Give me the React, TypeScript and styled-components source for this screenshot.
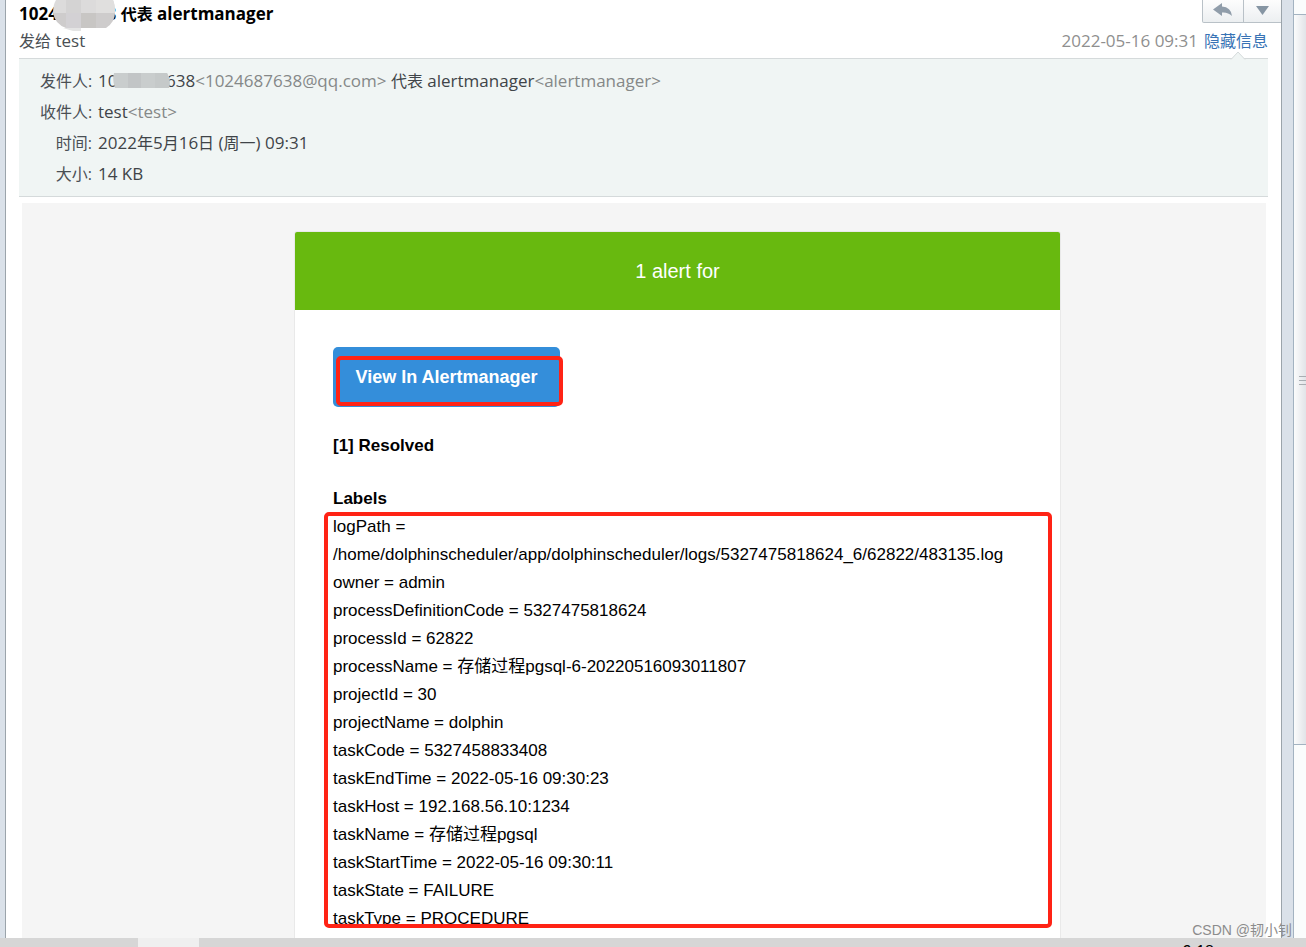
import React from "react";
import styled, { createGlobalStyle } from "styled-components";

const ui = `"Open Sans", "Noto Sans CJK SC", sans-serif`;
const mail = `"Liberation Sans", "Noto Sans CJK SC", sans-serif`;

const GlobalStyle = createGlobalStyle`
  *, *::before, *::after { box-sizing: border-box; }
  html, body { margin: 0; height: 100%; overflow: hidden; background: #fff; }
  #root { height: 100%; }
`;

const Screen = styled.div`
  position: relative;
  display: flex;
  flex-direction: column;
  height: 100vh;
  overflow: hidden;
  font-family: ${ui};
  color: #3f4448;
`;

const Workspace = styled.div`
  flex: 1;
  min-height: 0;
  display: flex;
  background: #dae1e9;
`;

const Reader = styled.main`
  flex: 1;
  min-width: 0;
  overflow: hidden;
  margin-left: 5px;
  padding: 0 13px;
  background: #fff;
  border: solid #9ba4ab;
  border-width: 0 1px;
`;

const Header = styled.header`
  display: flex;
  justify-content: space-between;
`;

const HeaderSide = styled.div<{ $end?: boolean }>`
  display: flex;
  flex-direction: column;
  align-items: ${(p) => (p.$end ? "flex-end" : "flex-start")};
`;

const Subject = styled.h1`
  position: relative;
  margin: 0;
  padding-top: 3px;
  height: 30px;
  font-size: 17px;
  line-height: 22px;
  font-weight: 700;
  color: #000;
`;

const SubLine = styled.div<{ $muted?: boolean }>`
  height: 28px;
  font-size: 17px;
  line-height: 22px;
  color: ${(p) => (p.$muted ? "#8f8f8f" : "#4a4f54")};
`;

const Hanzi = styled.span`
  font-size: 16px;
`;

const ToggleLink = styled.a`
  margin-left: 6px;
  font-size: 16px;
  color: #3873b5;
  text-decoration: none;
`;

const Toolbar = styled.div`
  display: flex;
  height: 30px;
  margin-right: -13px;
`;

const ToolButton = styled.button<{ $first?: boolean }>`
  display: flex;
  justify-content: center;
  width: ${(p) => (p.$first ? 42 : 37)}px;
  height: 23px;
  padding: 0;
  border: solid #b9c1c7;
  border-width: ${(p) => (p.$first ? "0 1px 1px 1px" : "0 0 1px 0")};
  border-radius: ${(p) => (p.$first ? "0 0 0 2px" : "0")};
  background: linear-gradient(#fdfdfd, #eceff1);
`;

const Details = styled.dl`
  position: relative;
  margin: 0;
  padding: 6px 21px 7px;
  background: #f0f5f4;
  border: solid #d5dadb;
  border-width: 1px 0;
`;

const Notch = styled.svg`
  position: absolute;
  top: -8px;
  right: 22px;
`;

const DetailRow = styled.div`
  display: flex;
  height: 31px;
  align-items: center;
  font-size: 17px;
  line-height: 24px;
`;

const DetailLabel = styled.dt`
  width: 58px;
  padding-right: 6px;
  font-size: 16px;
  text-align: right;
  white-space: nowrap;
  color: #4a4f54;
`;

const DetailValue = styled.dd`
  position: relative;
  margin: 0;
  white-space: nowrap;
`;

const Address = styled.span`
  color: #858888;
`;

const Mosaic = styled.svg<{ $x: number; $y: number }>`
  position: absolute;
  left: ${(p) => p.$x}px;
  top: ${(p) => p.$y}px;
`;

const MailBody = styled.section`
  display: grid;
  grid-template-columns: 272fr minmax(auto, 767px) 205fr;
  margin: 6px 2px 0 3px;
  padding-top: 28px;
  background: #f5f5f5;
  font-family: ${mail};
`;

const Card = styled.article`
  grid-column: 2;
  border: 1px solid #e9e9e9;
  border-radius: 3px;
  background: #fff;
  color: #000;
  overflow: hidden;
`;

const Banner = styled.h2`
  margin: 0;
  padding: 25px;
  background: #68b90f;
  color: #fff;
  font-size: 20px;
  line-height: 28px;
  font-weight: 400;
  text-align: center;
`;

const CardContent = styled.div`
  padding: 37px 38px;
  font-size: 17px;
  line-height: 28px;
`;

const ButtonWrap = styled.div`
  position: relative;
  width: 227px;
`;

const PrimaryButton = styled.a`
  display: block;
  height: 60px;
  border-radius: 5px;
  background: #348eda;
  color: #fff;
  font-size: 18px;
  line-height: 60px;
  font-weight: 700;
  text-align: center;
  text-decoration: none;
`;

const Highlight = styled.span<{ $inset: string }>`
  position: absolute;
  inset: ${(p) => p.$inset};
  border: 4px solid #ff2315;
  border-radius: 5px;
  pointer-events: none;
`;

const Heading = styled.h3`
  margin: 25px 0 0;
  font-size: 17px;
  line-height: 28px;
  font-weight: 700;
`;

const LabelList = styled.ul`
  position: relative;
  margin: 0;
  padding: 0;
  list-style: none;
`;

const SidePanel = styled.aside`
  display: flex;
  flex-direction: column;
  width: 13px;
  margin-left: 11px;
  border-left: 1px solid #a3b3c1;
  background: #fafcfc;
`;

const SideTop = styled.div`
  height: 15px;
  border-bottom: 1px solid #a3b3c1;
`;

const SideTrack = styled.div`
  display: flex;
  align-items: center;
  justify-content: flex-end;
  height: 730px;
  border-bottom: 1px solid #a3b3c1;
  background: linear-gradient(90deg, #fbfcfc, #e2e4e8);
`;

const Taskbar = styled.footer`
  flex: none;
  display: flex;
  height: 9px;
  overflow: hidden;
  background: #d6d6d6;
`;

const TaskItem = styled.div`
  width: 61px;
  margin-left: 138px;
  background: #efefef;
`;

const Clock = styled.time`
  margin: 4px 92px 0 auto;
  font-family: ${mail};
  font-size: 16px;
  line-height: 20px;
  color: #000;
`;

const Watermark = styled.div`
  position: absolute;
  right: 14px;
  bottom: 7px;
  font-family: ${mail};
  font-size: 14px;
  line-height: 20px;
  color: #8c8c8c;
`;

const labels: [string, string][] = [
  ["logPath", "/home/dolphinscheduler/app/dolphinscheduler/logs/5327475818624_6/62822/483135.log"],
  ["owner", "admin"],
  ["processDefinitionCode", "5327475818624"],
  ["processId", "62822"],
  ["processName", "存储过程pgsql-6-20220516093011807"],
  ["projectId", "30"],
  ["projectName", "dolphin"],
  ["taskCode", "5327458833408"],
  ["taskEndTime", "2022-05-16 09:30:23"],
  ["taskHost", "192.168.56.10:1234"],
  ["taskName", "存储过程pgsql"],
  ["taskStartTime", "2022-05-16 09:30:11"],
  ["taskState", "FAILURE"],
  ["taskType", "PROCEDURE"],
];

export default function App() {
  return (
    <Screen>
      <GlobalStyle />
      <Workspace>
        <Reader>
          <Header>
            <HeaderSide>
              <Subject>
                1024687638 <Hanzi>代表</Hanzi> alertmanager
                <Mosaic $x={34} $y={0} width="64" height="31" aria-hidden="true">
                  <path d="M3 0H60Q62 4 62 13H0Q0 5 3 0Z" fill="#dcdbdb" />
                  <path d="M13 0H28V13H13Z" fill="#d4d3d3" />
                  <path d="M43 0H60Q62 4 62 13H43Z" fill="#e0dfde" />
                  <path d="M0 13H62Q62 22 53 28H13Q2 24 0 13Z" fill="#cecccc" />
                  <path d="M13 13H28V28H13Z" fill="#d3d1d4" />
                  <path d="M28 13H43V28H28Z" fill="#c8c6c4" />
                  <path d="M10 28H28V31H20Z" fill="#e4e4e4" />
                </Mosaic>
              </Subject>
              <SubLine>
                <Hanzi>发给</Hanzi> test
              </SubLine>
            </HeaderSide>
            <HeaderSide $end>
              <Toolbar>
                <ToolButton $first aria-label="回复">
                  <svg width="20" height="18" viewBox="0 0 20 18" aria-hidden="true">
                    <path d="M0 9.500L9 3V6.500Q18 7 19 16Q15 12 9 12.500V16Z" fill="#909daa" />
                  </svg>
                </ToolButton>
                <ToolButton aria-label="更多">
                  <svg width="14" height="18" viewBox="0 0 14 18" aria-hidden="true">
                    <path d="M0 6H13L6.500 15Z" fill="#8695a3" />
                  </svg>
                </ToolButton>
              </Toolbar>
              <SubLine $muted>
                2022-05-16 09:31
                <ToggleLink href="#details">隐藏信息</ToggleLink>
              </SubLine>
            </HeaderSide>
          </Header>

          <Details id="details">
            <Notch width="16" height="9" aria-hidden="true">
              <path d="M1 8.500L8 1L15 8.500" fill="#f0f5f4" stroke="#d5dadb" />
            </Notch>
            <DetailRow>
              <DetailLabel>发件人:</DetailLabel>
              <DetailValue>
                1024687638<Address>&lt;1024687638@qq.com&gt;</Address> <Hanzi>代表</Hanzi> alertmanager
                <Address>&lt;alertmanager&gt;</Address>
                <Mosaic $x={15} $y={1} width="60" height="20" aria-hidden="true">
                  <path d="M1 3H54Q58 10 56 18H2Q-1 10 1 3Z" fill="#c9cdcd" />
                  <path d="M15 3H28V18H15Z" fill="#c2c5c6" />
                  <path d="M42 3H54Q58 10 56 18H42Z" fill="#c5c9c9" />
                </Mosaic>
              </DetailValue>
            </DetailRow>
            <DetailRow>
              <DetailLabel>收件人:</DetailLabel>
              <DetailValue>
                test<Address>&lt;test&gt;</Address>
              </DetailValue>
            </DetailRow>
            <DetailRow>
              <DetailLabel>时间:</DetailLabel>
              <DetailValue>
                2022<Hanzi>年</Hanzi>5<Hanzi>月</Hanzi>16<Hanzi>日</Hanzi> (<Hanzi>周一</Hanzi>) 09:31
              </DetailValue>
            </DetailRow>
            <DetailRow>
              <DetailLabel>大小:</DetailLabel>
              <DetailValue>14 KB</DetailValue>
            </DetailRow>
          </Details>

          <MailBody>
            <Card>
              <Banner>1 alert for</Banner>
              <CardContent>
                <ButtonWrap>
                  <PrimaryButton href="#alertmanager">View In Alertmanager</PrimaryButton>
                  <Highlight $inset="9px -3px 1px 3px" />
                </ButtonWrap>
                <Heading>[1] Resolved</Heading>
                <Heading>Labels</Heading>
                <LabelList>
                  {labels.map(([name, value]) => (
                    <li key={name}>
                      {name} = {value}
                    </li>
                  ))}
                  <Highlight $inset="-1px -30px 5px -9px" />
                </LabelList>
              </CardContent>
            </Card>
          </MailBody>
        </Reader>
        <SidePanel>
          <SideTop />
          <SideTrack>
            <svg width="8" height="10" aria-hidden="true">
              <path d="M1 1.500H8M1 5.500H8M1 9.500H8" stroke="#a9aeb3" />
            </svg>
          </SideTrack>
        </SidePanel>
      </Workspace>
      <Taskbar>
        <TaskItem />
        <Clock>9:18</Clock>
      </Taskbar>
      <Watermark>CSDN @韧小钊</Watermark>
    </Screen>
  );
}
